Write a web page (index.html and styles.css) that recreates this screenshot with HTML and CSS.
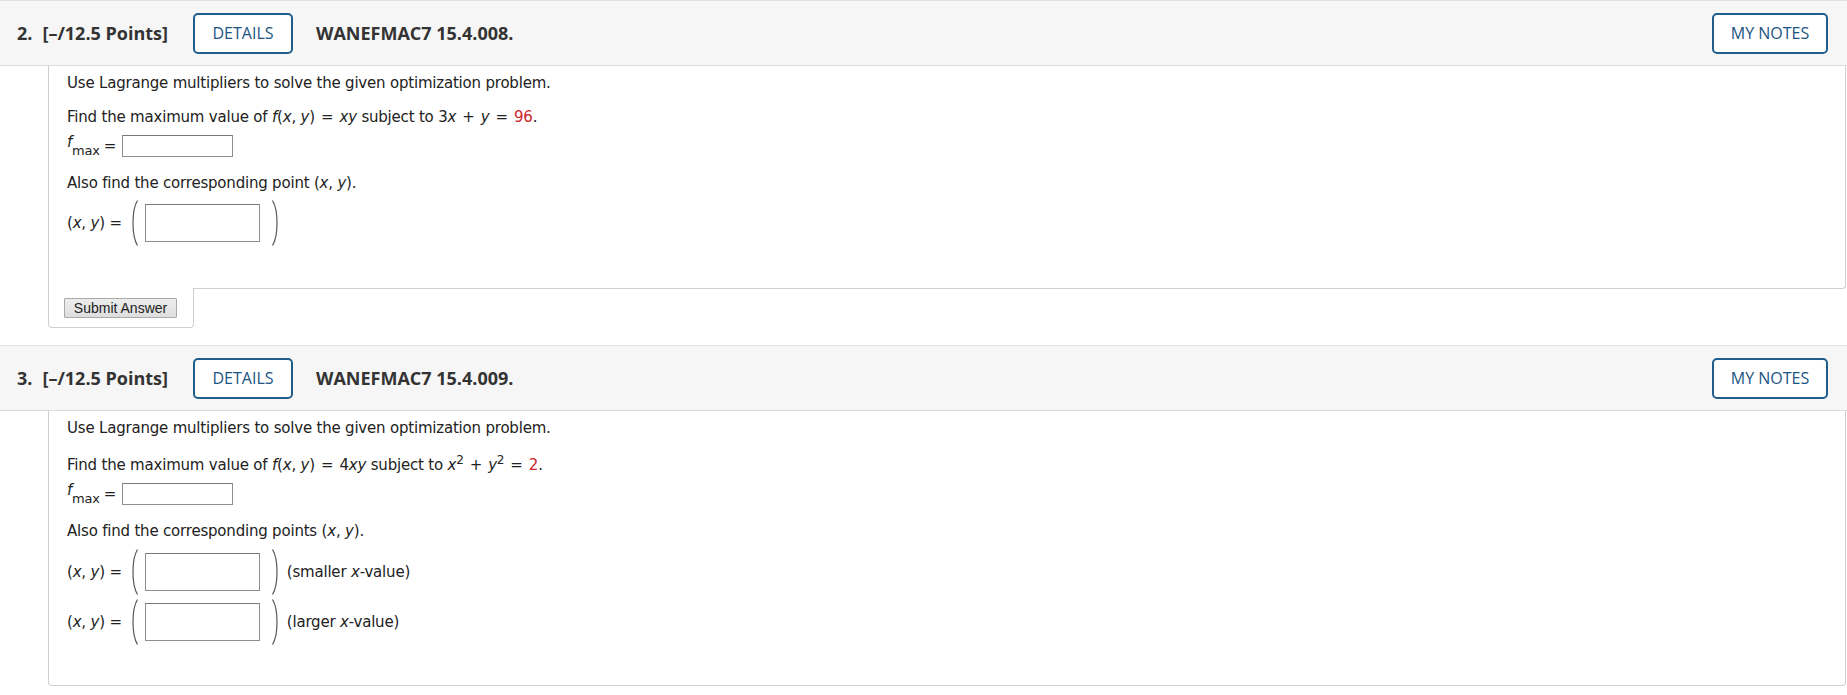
FILE: index.html
```html
<!DOCTYPE html>
<html>
<head>
<meta charset="utf-8">
<title>Questions</title>
<link rel="stylesheet" href="styles.css">
</head>
<body>
<div class="question">
  <div class="qhead">
    <span class="qnum">2.</span>
    <span class="qpts">[–/12.5 Points]</span>
    <button class="btn-outline details">DETAILS</button>
    <span class="qcode">WANEFMAC7 15.4.008.</span>
    <button class="btn-outline notes">MY NOTES</button>
  </div>
  <div class="qbody">
    <div class="qcontent with-tab">
      <p class="line l1">Use Lagrange multipliers to solve the given optimization problem.</p>
      <p class="line l2">Find the maximum value of <i>f</i>(<i>x</i>, <i>y</i>) <span class="op">=</span> <i>xy</i> subject to 3<i>x</i> <span class="op">+</span> <i>y</i> <span class="op">=</span> <span class="red">96</span>.</p>
      <div class="fmax-row"><span class="fmax"><i class="fv">f</i><span class="sub">max</span></span><span class="eq">=</span><span class="input small"></span></div>
      <p class="line l3">Also find the corresponding point (<i>x</i>, <i>y</i>).</p>
      <div class="pt-row">
        <span class="lbl">(<i>x</i>, <i>y</i>) =</span>
        <svg class="paren lp" width="10" height="46" viewBox="0 0 10 46"><path d="M8.5 0.5 C2.5 10 2.5 36 8.5 45.5" fill="none" stroke="#555" stroke-width="1.2"/></svg>
        <span class="input big"></span>
        <svg class="paren rp" width="10" height="46" viewBox="0 0 10 46"><path d="M1.5 0.5 C7.5 10 7.5 36 1.5 45.5" fill="none" stroke="#555" stroke-width="1.2"/></svg>
      </div>
    </div>
    <div class="submit-tab"><button class="submit">Submit Answer</button></div>
  </div>
</div>

<div class="question q2">
  <div class="qhead">
    <span class="qnum">3.</span>
    <span class="qpts">[–/12.5 Points]</span>
    <button class="btn-outline details">DETAILS</button>
    <span class="qcode">WANEFMAC7 15.4.009.</span>
    <button class="btn-outline notes">MY NOTES</button>
  </div>
  <div class="qbody">
    <div class="qcontent full">
      <p class="line l1">Use Lagrange multipliers to solve the given optimization problem.</p>
      <p class="line l2 tall">Find the maximum value of <i>f</i>(<i>x</i>, <i>y</i>) <span class="op">=</span> 4<i>xy</i> subject to <i>x</i><sup>2</sup> <span class="op">+</span> <i>y</i><sup>2</sup> <span class="op">=</span> <span class="red">2</span>.</p>
      <div class="fmax-row"><span class="fmax"><i class="fv">f</i><span class="sub">max</span></span><span class="eq">=</span><span class="input small"></span></div>
      <p class="line l3">Also find the corresponding points (<i>x</i>, <i>y</i>).</p>
      <div class="pt-row">
        <span class="lbl">(<i>x</i>, <i>y</i>) =</span>
        <svg class="paren lp" width="10" height="46" viewBox="0 0 10 46"><path d="M8.5 0.5 C2.5 10 2.5 36 8.5 45.5" fill="none" stroke="#555" stroke-width="1.2"/></svg>
        <span class="input big"></span>
        <svg class="paren rp" width="10" height="46" viewBox="0 0 10 46"><path d="M1.5 0.5 C7.5 10 7.5 36 1.5 45.5" fill="none" stroke="#555" stroke-width="1.2"/></svg>
        <span class="note">(smaller <i>x</i>-value)</span>
      </div>
      <div class="pt-row second">
        <span class="lbl">(<i>x</i>, <i>y</i>) =</span>
        <svg class="paren lp" width="10" height="46" viewBox="0 0 10 46"><path d="M8.5 0.5 C2.5 10 2.5 36 8.5 45.5" fill="none" stroke="#555" stroke-width="1.2"/></svg>
        <span class="input big"></span>
        <svg class="paren rp" width="10" height="46" viewBox="0 0 10 46"><path d="M1.5 0.5 C7.5 10 7.5 36 1.5 45.5" fill="none" stroke="#555" stroke-width="1.2"/></svg>
        <span class="note">(larger <i>x</i>-value)</span>
      </div>
    </div>
  </div>
</div>
</body>
</html>
```
FILE: styles.css
```css
* { box-sizing: border-box; }
html, body { margin: 0; padding: 0; background: #fff; }
body {
  font-family: "DejaVu Sans", Verdana, sans-serif;
  font-size: 15px;
  letter-spacing: -0.2px;
  color: #222;
}

.qhead {
  display: flex;
  align-items: center;
  height: 66px;
  background: #f6f6f6;
  border-top: 1px solid #e0e0e0;
  border-bottom: 1px solid #dcdcdc;
  font-family: "Open Sans", sans-serif;
  letter-spacing: 0;
  color: #333;
}
.qnum { margin-left: 17px; font-weight: 700; font-size: 18px; }
.qpts { margin-left: 10px; font-weight: 700; font-size: 18px; }
.qcode { margin-left: 23px; font-weight: 700; font-size: 18px; }
.btn-outline {
  height: 41px;
  background: #fff;
  border: 2px solid #1e5d8c;
  border-radius: 5px;
  color: #1b5583;
  font-family: "Open Sans", sans-serif;
  font-size: 16px;
  letter-spacing: 0;
  padding: 0;
}
.details { width: 100px; margin-left: 25px; }
.notes { width: 116px; margin-left: auto; margin-right: 19px; }

.qbody { margin-left: 48px; margin-right: 1px; }
.qcontent {
  border-left: 1px solid #cfcfcf;
  border-right: 1px solid #cfcfcf;
  border-bottom: 1px solid #cfcfcf;
  border-bottom-right-radius: 4px;
  padding: 7px 18px 42px;
}
.qcontent.full { border-bottom-left-radius: 4px; padding-bottom: 40px; }

.line { margin: 0; line-height: 20px; }
.l2 { margin-top: 14px; }
.l2.tall { margin-top: 17px; }
.l3 { margin-top: 16px; }
.op { margin: 0 1.5px; }
.red { color: #d0242b; }
sup { font-size: 12px; line-height: 0; vertical-align: 6px; }

.fmax-row {
  display: flex;
  align-items: center;
  height: 22px;
  margin-top: 8px;
}
.fmax { line-height: 22px; }
.fv { vertical-align: 3px; }
.sub { margin-left: 0; font-size: 13px; vertical-align: -5px; }
.eq { margin-left: 4px; }
.input {
  display: block;
  background: #fff;
  border: 1px solid #8f8f8f;
  border-top-color: #7a7a7a;
}
.input.small { width: 111px; height: 22px; margin-left: 6px; }

.pt-row {
  display: flex;
  align-items: center;
  height: 46px;
  margin-top: 7px;
}
.q2 .pt-row { margin-top: 8px; }
.q2 .pt-row.second { margin-top: 4px; }
.paren { display: block; }
.lp { margin-left: 7px; }
.input.big { width: 115px; height: 38px; margin-left: 6px; }
.rp { margin-left: 11px; }
.note { margin-left: 6px; }

.submit-tab {
  width: 146px;
  margin-top: -1px;
  background: #fff;
  border-left: 1px solid #cfcfcf;
  border-right: 1px solid #cfcfcf;
  border-bottom: 1px solid #cfcfcf;
  border-radius: 0 0 4px 4px;
  padding: 10px 0 9px 15px;
}
.submit {
  display: block;
  width: 113px;
  height: 20px;
  padding: 0;
  font-family: "Liberation Sans", Arial, sans-serif;
  font-size: 14px;
  letter-spacing: 0;
  color: #222;
  background: linear-gradient(#ededed, #dedede);
  border: 1px solid #a9a9a9;
  border-radius: 1px;
}

.q2 { margin-top: 17px; }
```
